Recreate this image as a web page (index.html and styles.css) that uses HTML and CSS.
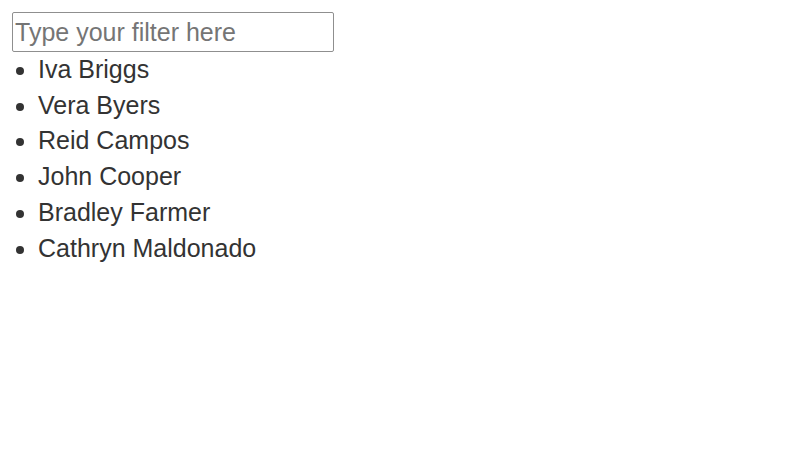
FILE: index.html
```html
<!DOCTYPE html>
<html>
<head>
<meta charset="utf-8">
<link rel="stylesheet" href="styles.css">
</head>
<body>
<div class="app">
  <input class="filter" type="text" placeholder="Type your filter here">
  <ul class="names">
    <li>Iva Briggs</li>
    <li>Vera Byers</li>
    <li>Reid Campos</li>
    <li>John Cooper</li>
    <li>Bradley Farmer</li>
    <li>Cathryn Maldonado</li>
  </ul>
</div>
</body>
</html>
```
FILE: styles.css
```css
html, body {
  margin: 0;
  background: #fff;
}
body {
  font-family: "Liberation Sans", Arial, sans-serif;
  color: #333;
  font-size: 25px;
  line-height: 1.428571;
}
.app {
  padding: 12px;
}
.filter {
  display: block;
  box-sizing: border-box;
  width: 322px;
  height: 40px;
  margin: 0;
  padding: 0 2px;
  font: inherit;
  font-size: 25px;
  color: #333;
  border: 1px solid #8f8f8f;
  border-radius: 2px;
  background: #fff;
}
.filter::placeholder {
  color: #757575;
}
.names {
  margin: 0;
  padding-left: 26px;
}
```
